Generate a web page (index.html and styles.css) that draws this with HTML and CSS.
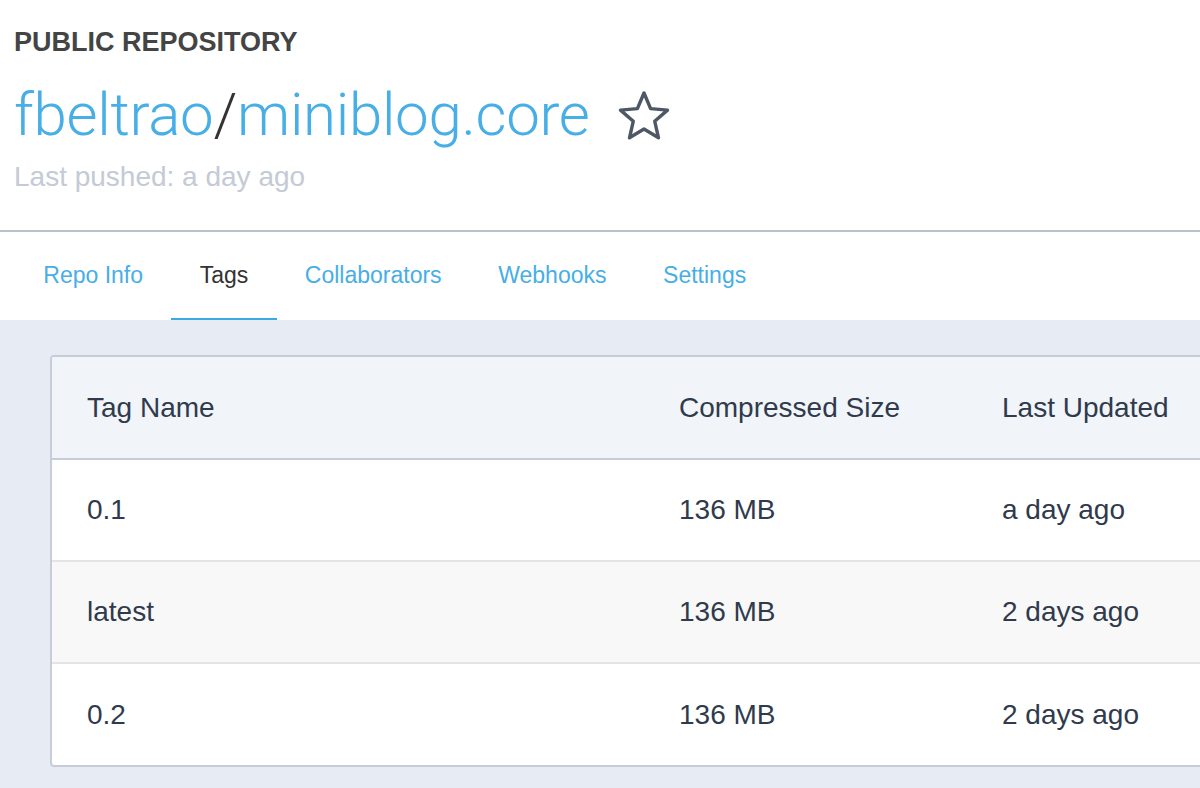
FILE: index.html
```html
<!DOCTYPE html>
<html lang="en">
<head>
  <meta charset="UTF-8" />
  <title>fbeltrao/miniblog.core</title>
  <link rel="stylesheet" href="styles.css">
</head>
<body>

  <header class="repo-header">
    <div class="repo-kind">Public Repository</div>
    <div class="repo-title">
      <h1 class="repo-name"><a href="#">fbeltrao</a><span class="sep">/</span><a href="#">miniblog.core</a></h1>
      <svg class="star" viewBox="0 0 52 52" width="52" height="52" aria-hidden="true">
        <polygon points="26,3 32.6,18.6 49.5,20.1 36.7,31.2 40.5,47.8 26,39 11.5,47.8 15.3,31.2 2.5,20.1 19.4,18.6"
          fill="none" stroke="#4d5766" stroke-width="3.4" stroke-linejoin="round" />
      </svg>
    </div>
    <div class="pushed">Last pushed: a day ago</div>
  </header>

  <nav class="tabs">
    <a class="tab" href="#">Repo Info</a>
    <a class="tab active" href="#">Tags</a>
    <a class="tab" href="#">Collaborators</a>
    <a class="tab" href="#">Webhooks</a>
    <a class="tab" href="#">Settings</a>
  </nav>

  <main class="content">
    <div class="card">
      <table class="tags">
        <thead>
          <tr>
            <th class="col-name">Tag Name</th>
            <th class="col-size">Compressed Size</th>
            <th class="col-date">Last Updated</th>
          </tr>
        </thead>
        <tbody>
          <tr><td>0.1</td><td>136 MB</td><td>a day ago</td></tr>
          <tr><td>latest</td><td>136 MB</td><td>2 days ago</td></tr>
          <tr><td>0.2</td><td>136 MB</td><td>2 days ago</td></tr>
        </tbody>
      </table>
    </div>
  </main>

</body>
</html>
```

FILE: styles.css
```css
*, *::before, *::after { box-sizing: border-box; margin: 0; padding: 0; }

html, body {
  height: 100%;
}

body {
  background: #e7ecf4;
  font-family: "Liberation Sans", Arial, Helvetica, sans-serif;
  color: #2f3b4c;
  overflow: hidden;
  display: flex;
  flex-direction: column;
}

a { text-decoration: none; }

/* Header */
.repo-header {
  background: #fff;
  padding: 27px 14px 37px;
  border-bottom: 2px solid #bac1c9;
}

.repo-kind {
  font-size: 27px;
  font-weight: 700;
  text-transform: uppercase;
  color: #444;
  line-height: 30px;
}

.repo-title {
  display: flex;
  align-items: center;
  gap: 28px;
  margin-top: 23px;
  height: 70px;
}

.repo-name {
  font-family: "Roboto", "Liberation Sans", sans-serif;
  font-weight: 300;
  font-size: 60px;
  line-height: 70px;
  letter-spacing: -0.3px;
}

.repo-name a { color: #47aee6; }
.repo-name .sep { color: #333; }

.star { flex-shrink: 0; margin-top: 2px; }

.pushed {
  font-size: 28px;
  color: #c4cad6;
  margin-top: 11px;
  line-height: 32px;
}

/* Tabs */
.tabs {
  background: #fff;
  display: flex;
  padding-left: 15px;
  height: 88px;
}

.tab {
  display: flex;
  align-items: center;
  padding: 0 28.3px;
  font-size: 23px;
  color: #47aee6;
  border-bottom: 2px solid transparent;
}

.tab.active {
  color: #333;
  border-bottom-color: #3aa9e4;
}

/* Tag table */
.content {
  flex: 1;
  padding: 35px 0 0 50px;
}

.card {
  width: 1200px;
  background: #fff;
  border: 2px solid #c6ccd8;
  border-radius: 4px;
  overflow: hidden;
}

.tags {
  width: 100%;
  border-collapse: collapse;
  font-size: 28px;
}

.tags th,
.tags td {
  text-align: left;
  font-weight: 400;
  padding: 0 35px;
  height: 102px;
  color: #2f3b4c;
}

.tags thead th {
  background: #f1f4f9;
  border-bottom: 2px solid #c6ccd8;
  height: 102px;
}

.tags tbody tr + tr td { border-top: 2px solid #e3e4e6; }
.tags tbody tr:nth-child(2) td { background: #f8f8f8; }

.col-name { width: 592px; }
.col-size { width: 323px; }
```
